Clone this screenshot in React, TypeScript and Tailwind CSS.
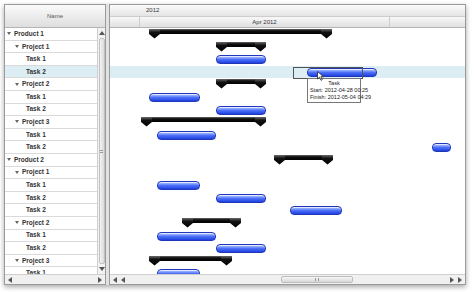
type Row = { label: string; level: 0 | 1 | 2 };
type Bar = { kind: "sum" | "task"; x1: number; x2: number };

const rows: Row[] = [
  { label: "Product 1", level: 0 },
  { label: "Project 1", level: 1 },
  { label: "Task 1", level: 2 },
  { label: "Task 2", level: 2 },
  { label: "Project 2", level: 1 },
  { label: "Task 1", level: 2 },
  { label: "Task 2", level: 2 },
  { label: "Project 3", level: 1 },
  { label: "Task 1", level: 2 },
  { label: "Task 2", level: 2 },
  { label: "Product 2", level: 0 },
  { label: "Project 1", level: 1 },
  { label: "Task 1", level: 2 },
  { label: "Task 2", level: 2 },
  { label: "Task 2", level: 2 },
  { label: "Project 2", level: 1 },
  { label: "Task 1", level: 2 },
  { label: "Task 2", level: 2 },
  { label: "Project 3", level: 1 },
  { label: "Task 1", level: 2 },
];

// chart x positions are screen px; the chart body starts at x=110
const bars: (Bar | null)[] = [
  { kind: "sum", x1: 149, x2: 332 },
  { kind: "sum", x1: 216, x2: 266 },
  { kind: "task", x1: 216, x2: 266 },
  { kind: "task", x1: 307, x2: 377 },
  { kind: "sum", x1: 216, x2: 266 },
  { kind: "task", x1: 149, x2: 200 },
  { kind: "task", x1: 216, x2: 266 },
  { kind: "sum", x1: 141, x2: 266 },
  { kind: "task", x1: 157, x2: 216 },
  { kind: "task", x1: 432, x2: 451 },
  { kind: "sum", x1: 274, x2: 333 },
  null,
  { kind: "task", x1: 157, x2: 200 },
  { kind: "task", x1: 216, x2: 266 },
  { kind: "task", x1: 290, x2: 342 },
  { kind: "sum", x1: 182, x2: 241 },
  { kind: "task", x1: 157, x2: 216 },
  { kind: "task", x1: 216, x2: 266 },
  { kind: "sum", x1: 149, x2: 232 },
  { kind: "task", x1: 157, x2: 200 },
];

const ORIGIN = 110;
const SELECTED = 3;

function Caret({ dir }: { dir: "up" | "down" | "left" | "right" }) {
  const pts = {
    up: "0,4 3,0 6,4",
    down: "0,0 6,0 3,4",
    left: "4,0 4,6 0,3",
    right: "0,0 0,6 4,3",
  }[dir];
  const w = dir === "up" || dir === "down" ? 6 : 4;
  const h = dir === "up" || dir === "down" ? 4 : 6;
  return (
    <svg width={w} height={h} viewBox={`0 0 ${w} ${h}`} className="block">
      <polygon points={pts} fill="#555" />
    </svg>
  );
}

function SummaryBar({ x1, x2 }: { x1: number; x2: number }) {
  const w = x2 - x1;
  return (
    <svg
      width={w}
      height={10}
      viewBox={`0 0 ${w} 10`}
      className="absolute top-[1px]"
      style={{ left: x1 - ORIGIN }}
    >
      <defs>
        <linearGradient id="sumg" x1="0" y1="0" x2="0" y2="1">
          <stop offset="0" stopColor="#6a6a6a" />
          <stop offset="0.35" stopColor="#111" />
          <stop offset="1" stopColor="#000" />
        </linearGradient>
      </defs>
      <rect x={0} y={0} width={w} height={5} fill="url(#sumg)" />
      <polygon points="0,0 11,0 11,5 5.5,9.5 0,5" fill="url(#sumg)" />
      <polygon
        points={`${w - 11},0 ${w},0 ${w},5 ${w - 5.5},9.5 ${w - 11},5`}
        fill="url(#sumg)"
      />
    </svg>
  );
}

function TaskBar({ x1, x2 }: { x1: number; x2: number }) {
  return (
    <div
      className="absolute top-[2px] h-[9px] rounded-[4px] border border-[#2037b8] bg-linear-to-b from-[#c3cfff] via-[#4d6ff8] to-[#1d3fe0] shadow-[inset_0_1px_0_rgba(255,255,255,0.6)]"
      style={{ left: x1 - ORIGIN, width: x2 - x1 }}
    />
  );
}

export default function App() {
  return (
    <div className="w-[474px] h-[292px] bg-white pt-[4px] pl-[4px] overflow-hidden" style={{ fontFamily: '"Liberation Sans", Arial, sans-serif' }}>
      <div className="flex w-[462px] h-[281px] gap-[3px] bg-[#e2e2e2] shadow-[0_2px_5px_rgba(0,0,0,0.35)]">
        {/* left grid */}
        <div className="flex flex-col w-[102px] border border-[#9a9a9a] bg-white">
          <div className="h-[23px] flex items-center justify-center border-b border-[#b5b5b5] bg-linear-to-b from-[#fbfbfb] to-[#dedede] text-[6px] text-[#555]">
            Name
          </div>
          <div className="flex flex-1 min-h-0">
            <div className="flex-1 overflow-hidden">
              {rows.map((r, i) => (
                <div
                  key={i}
                  className={`h-[12.6px] flex items-center gap-[3px] border-b border-[#dadada] text-[6.5px] font-bold text-[#333] ${
                    i === SELECTED ? "bg-[#dcedf3]" : ""
                  } ${r.level === 0 ? "pl-[2px]" : r.level === 1 ? "pl-[10px]" : "pl-[21px]"}`}
                >
                  {r.level < 2 && (
                    <svg width={4} height={3} viewBox="0 0 4 3" className="block">
                      <polygon points="0,0 4,0 2,3" fill="#666" />
                    </svg>
                  )}
                  <span>{r.label}</span>
                </div>
              ))}
            </div>
            <div className="w-[8px] flex flex-col items-center border-l border-[#cfcfcf] bg-[#f2f2f2] py-[3px] gap-[3px]">
              <Caret dir="up" />
              <div className="flex-1 w-[6px] rounded-[2px] border border-[#c2c2c2] bg-linear-to-r from-[#f4f4f4] to-[#dadada] flex items-center justify-center">
                <div className="w-[3px] h-[3px] border-y border-[#999]" />
              </div>
              <Caret dir="down" />
            </div>
          </div>
          <div className="h-[10px] flex items-center justify-between px-[3px] border-t border-[#cfcfcf] bg-[#f0f0f0]">
            <Caret dir="left" />
            <Caret dir="right" />
          </div>
        </div>

        {/* right chart */}
        <div className="flex flex-col flex-1 border border-[#9a9a9a] bg-white">
          <div className="h-[12px] flex items-center pl-[36px] border-b border-[#cdcdcd] bg-linear-to-b from-[#fbfbfb] to-[#e4e4e4] text-[6px] text-[#333]">
            2012
          </div>
          <div className="h-[11px] flex border-b border-[#b5b5b5] bg-linear-to-b from-[#f8f8f8] to-[#e0e0e0] text-[6px] text-[#333]">
            <div className="w-[30px] border-r border-[#cdcdcd]" />
            <div className="w-[250px] flex items-center justify-center border-r border-[#cdcdcd]">
              Apr 2012
            </div>
            <div className="flex-1" />
          </div>
          <div className="relative flex-1 min-h-0 overflow-hidden">
            {rows.map((_, i) => {
              const b = bars[i];
              return (
                <div
                  key={i}
                  className={`relative h-[12.6px] ${i === SELECTED ? "bg-[#dcedf3]" : ""}`}
                >
                  {b && b.kind === "sum" && <SummaryBar x1={b.x1} x2={b.x2} />}
                  {b && b.kind === "task" && <TaskBar x1={b.x1} x2={b.x2} />}
                  {i === SELECTED && (
                    <div
                      className="absolute top-[1px] h-[12px] border border-[#555]"
                      style={{ left: 293 - ORIGIN, width: 70 }}
                    />
                  )}
                </div>
              );
            })}

            {/* tooltip */}
            <div className="absolute left-[197px] top-[50px] w-[54px] border border-[#777] bg-white px-[2px] py-[1px] text-[5.5px] leading-[7px] text-[#222] whitespace-nowrap">
              <div className="text-center">Task</div>
              <div>Start: 2012-04-28 00:25</div>
              <div>Finish: 2012-05-04 04:29</div>
            </div>
            {/* mouse cursor */}
            <svg width={7} height={10} viewBox="0 0 7 10" className="absolute left-[207px] top-[43px]">
              <polygon points="0.5,0.5 0.5,8 2.5,6.2 4,9.3 5.3,8.7 3.9,5.7 6.5,5.7" fill="#fff" stroke="#222" strokeWidth={0.8} />
            </svg>
          </div>
          <div className="h-[10px] flex items-center border-t border-[#cfcfcf] bg-[#f0f0f0] px-[3px]">
            <div className="flex items-center gap-[4px]">
              <Caret dir="left" />
              <Caret dir="left" />
            </div>
            <div className="flex-1 h-full flex items-center">
              <div className="ml-[156px] w-[72px] h-[7px] rounded-[2px] border border-[#bdbdbd] bg-linear-to-b from-[#f6f6f6] to-[#d8d8d8] flex items-center justify-center">
                <div className="w-[4px] h-[3px] border-x border-[#999]" />
              </div>
            </div>
            <div className="flex items-center gap-[4px]">
              <Caret dir="right" />
              <Caret dir="right" />
            </div>
          </div>
        </div>
      </div>
    </div>
  );
}
